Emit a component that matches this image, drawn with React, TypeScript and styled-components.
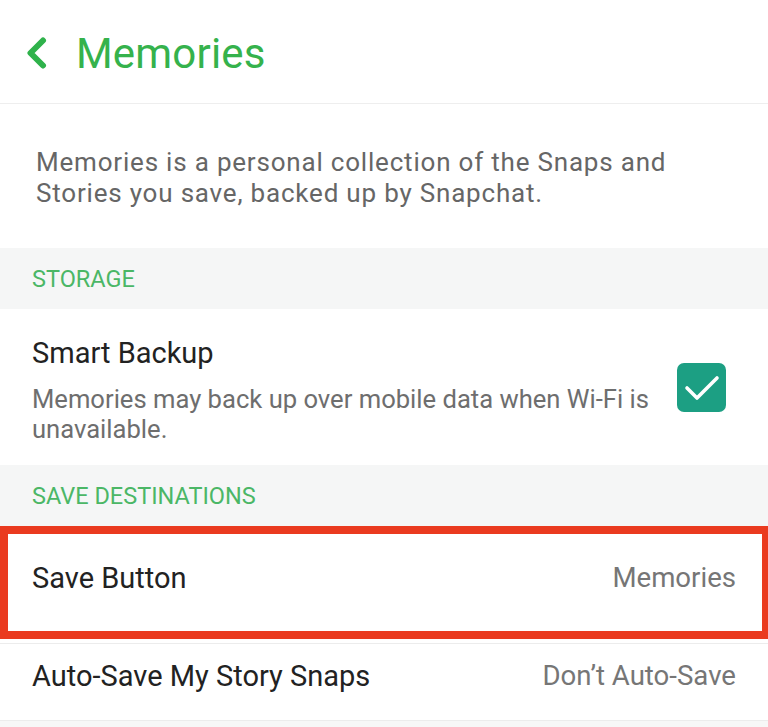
import React from "react";
import styled, { createGlobalStyle } from "styled-components";

const GlobalStyle = createGlobalStyle`
  html, body {
    margin: 0;
    padding: 0;
    background: #ffffff;
  }
  body {
    font-family: Roboto, "Noto Sans", "Liberation Sans", sans-serif;
    -webkit-font-smoothing: antialiased;
  }
`;

const App = () => {
  return (
    <Page>
      <GlobalStyle />
      <Header>
        <Back aria-label="Back">
          <svg width="22" height="32" viewBox="0 0 22 32" fill="none">
            <path
              d="M17 3.5 L4.5 16 L17 28.5"
              stroke="#2fb24b"
              strokeWidth="6"
              strokeLinecap="round"
              strokeLinejoin="round"
            />
          </svg>
        </Back>
        <Title>Memories</Title>
      </Header>

      <Intro>
        Memories is a personal collection of the Snaps and Stories you save,
        backed up by Snapchat.
      </Intro>

      <SectionLabel>STORAGE</SectionLabel>
      <BackupRow>
        <BackupText>
          <RowTitle>Smart Backup</RowTitle>
          <RowDesc>
            Memories may back up over mobile data when Wi-Fi is unavailable.
          </RowDesc>
        </BackupText>
        <Check>
          <svg width="36" height="28" viewBox="0 0 36 28" fill="none">
            <path
              d="M3 14 L13 24 L33 4"
              stroke="#ffffff"
              strokeWidth="3.6"
              strokeLinecap="round"
              strokeLinejoin="round"
            />
          </svg>
        </Check>
      </BackupRow>

      <SectionLabel>SAVE DESTINATIONS</SectionLabel>
      <Row $top={34} $bottom={47}>
        <RowTitle>Save Button</RowTitle>
        <Value>Memories</Value>
        <Frame />
      </Row>
      <Row $top={14} $bottom={26}>
        <RowTitle>Auto-Save My Story Snaps</RowTitle>
        <Value>Don’t Auto-Save</Value>
      </Row>
      <Footer />
    </Page>
  );
};

export default App;

const Page = styled.div`
  width: 768px;
  height: 727px;
  overflow: hidden;
  background: #ffffff;
`;

const Header = styled.div`
  height: 104px;
  box-sizing: border-box;
  display: flex;
  align-items: center;
  padding-left: 26px;
  padding-top: 3px;
  border-bottom: 1px solid #eeeeee;
`;

const Back = styled.div`
  display: flex;
  align-items: center;
  margin-right: 28px;
`;

const Title = styled.h1`
  margin: 0;
  font-size: 42px;
  font-weight: 400;
  color: #35b24c;
  letter-spacing: 0.2px;
`;

const Intro = styled.p`
  margin: 0;
  padding: 43px 40px 39px 36px;
  font-size: 26px;
  line-height: 31px;
  letter-spacing: 0.8px;
  color: #666666;
`;

const SectionLabel = styled.div`
  height: 61px;
  display: flex;
  align-items: center;
  padding-left: 32px;
  background: #f5f6f6;
  font-size: 23.5px;
  color: #4bb766;
`;

const BackupRow = styled.div`
  display: flex;
  align-items: center;
  padding: 26px 42px 21px 32px;
`;

const BackupText = styled.div`
  flex: 1;
  display: flex;
  flex-direction: column;
  gap: 13px;
  padding-right: 20px;
`;

const RowTitle = styled.div`
  font-size: 29px;
  line-height: 36px;
  color: #222222;
`;

const RowDesc = styled.div`
  font-size: 25.6px;
  line-height: 30px;
  color: #6e6e6e;
`;

const Check = styled.div`
  width: 49px;
  height: 49px;
  border-radius: 7px;
  background: #1c9f83;
  display: flex;
  align-items: center;
  justify-content: center;
  margin-bottom: 4px;
`;

const Row = styled.div<{ $top: number; $bottom: number }>`
  position: relative;
  display: flex;
  align-items: center;
  justify-content: space-between;
  padding: ${(p) => p.$top}px 32px ${(p) => p.$bottom}px 32px;
  border-bottom: 1px solid #ececec;
`;

const Value = styled.div`
  font-size: 27.6px;
  line-height: 36px;
  color: #767676;
`;

/* red annotation frame drawn over the highlighted row */
const Frame = styled.div`
  position: absolute;
  left: 0;
  right: 0;
  top: 0;
  height: 113px;
  box-sizing: border-box;
  border: 8px solid #ea3a1f;
  border-right-width: 6px;
  pointer-events: none;
`;

const Footer = styled.div`
  height: 20px;
  background: #f7f7f7;
`;
